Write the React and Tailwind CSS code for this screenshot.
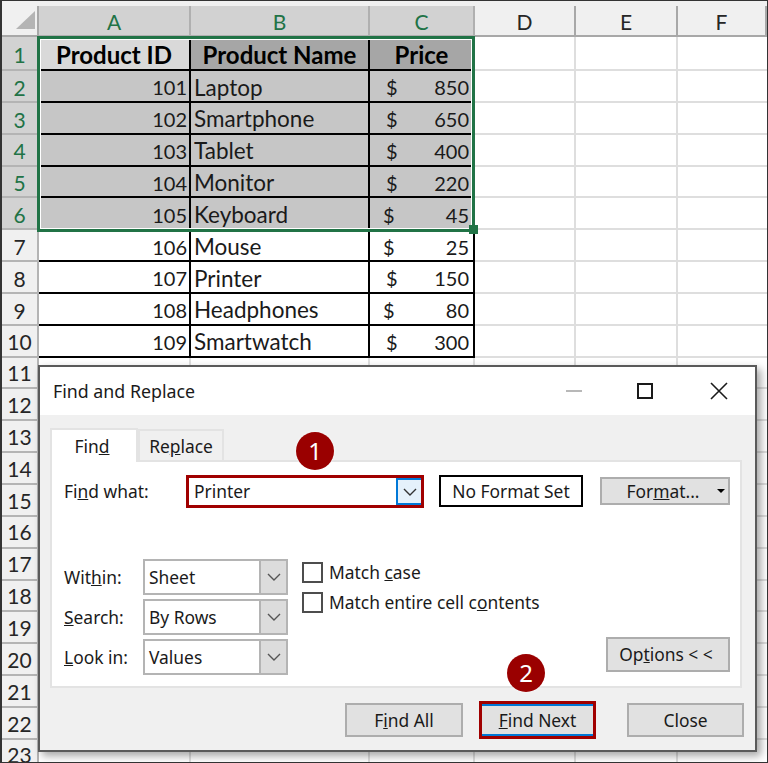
const sheetFont = { fontFamily: '"Lato", "Liberation Sans", sans-serif' };
const uiFont = { fontFamily: '"Noto Sans", "Liberation Sans", sans-serif' };

const rows = [
  ["101", "Laptop", "850", "pl-[16px]"],
  ["102", "Smartphone", "650", "pl-[16px]"],
  ["103", "Tablet", "400", "pl-[16px]"],
  ["104", "Monitor", "220", "pl-[16px]"],
  ["105", "Keyboard", "45", "pl-[13px]"],
  ["106", "Mouse", "25", "pl-[13px]"],
  ["107", "Printer", "150", "pl-[16px]"],
  ["108", "Headphones", "80", "pl-[13px]"],
  ["109", "Smartwatch", "300", "pl-[16px]"],
];

function RowHead({ n }) {
  const on = n <= 6;
  return (
    <div className={`w-[37px] shrink-0 flex items-center justify-center box-border border-b-2 border-r-2 text-[21px] ${n > 10 ? "pt-[1px]" : "pt-[3px]"} ${on ? "bg-[#d2d2d2] text-[#217346] border-[#b4b4b4]" : "bg-[#f0f0f0] text-[#262626] border-[#b4b4b4]"}`}>
      {n}
    </div>
  );
}

function Blank() {
  return (
    <>
      <div className="w-[101px] border-r-2 border-b-2 border-[#dedede]" />
      <div className="w-[102px] border-r-2 border-b-2 border-[#dedede]" />
      <div className="flex-1 border-b-2 border-[#dedede]" />
    </>
  );
}

function ColHead({ label, on, className }) {
  return (
    <div className={`flex items-center justify-center box-border border-r-2 border-b-2 pt-[2px] text-[21px] ${on ? "bg-[#d2d2d2] text-[#217346] border-[#b0b0b0]" : "text-[#262626] border-[#a8a8a8]"} ${className}`}>
      {label}
    </div>
  );
}

function Sheet() {
  return (
    <div className="flex flex-col" style={sheetFont}>
      <div className="flex h-[31px] mt-[5px] text-center">
        <div className="w-[37px] shrink-0 relative border-b-2 border-r-2 border-[#a8a8a8]">
          <svg className="absolute left-[13px] top-[5px]" width="20" height="20" viewBox="0 0 20 20">
            <polygon points="20,0 20,18 1,18" fill="#b4b4b4" />
          </svg>
        </div>
        <ColHead label="A" on className="w-[152px]" />
        <ColHead label="B" on className="w-[179px]" />
        <ColHead label="C" on className="w-[105px]" />
        <ColHead label="D" className="w-[101px]" />
        <ColHead label="E" className="w-[102px]" />
        <ColHead label="F" className="flex-1 border-r-0" />
      </div>

      <div className="flex h-[34px]">
        <RowHead n={1} />
        <div className="w-[152px] bg-[#d9d9d9] border-r-2 border-b-2 border-black flex items-center justify-center pt-[3px] font-bold text-[24px] text-black">Product ID</div>
        <div className="w-[179px] bg-[#a6a6a6] border-r-2 border-b-2 border-black flex items-center justify-center pt-[3px] font-bold text-[24px] text-black">Product Name</div>
        <div className="w-[105px] bg-[#a6a6a6] border-r-2 border-b-2 border-black flex items-center justify-center pt-[3px] font-bold text-[24px] text-black">Price</div>
        <Blank />
      </div>

      {rows.map((r, i) => {
        const on = i < 5;
        const bg = on ? "bg-[#c6c6c6]" : "bg-white";
        return (
          <div key={r[0]} className="flex h-[31.85px] text-[22.5px] text-[#1a1a1a]">
            <RowHead n={i + 2} />
            <div className={`w-[152px] ${bg} border-r-2 border-b-2 border-black flex items-center justify-end pr-[2px] pt-[3px] text-[20px]`}>{r[0]}</div>
            <div className={`w-[179px] ${bg} border-r-2 border-b-2 border-black flex items-center pl-[3px] pt-[3px]`}>{r[1]}</div>
            <div className={`w-[105px] ${bg} border-r-2 border-b-2 border-black flex items-center justify-between pr-[4px] pt-[3px] text-[20px] ${r[3]}`}>
              <span>$</span>
              <span>{r[2]}</span>
            </div>
            <Blank />
          </div>
        );
      })}

      {Array.from({ length: 13 }, (_, i) => (
        <div key={i} className="flex h-[31.85px]">
          <RowHead n={i + 11} />
          <div className="w-[152px] border-r-2 border-b-2 border-[#dedede]" />
          <div className="w-[179px] border-r-2 border-b-2 border-[#dedede]" />
          <div className="w-[105px] border-r-2 border-b-2 border-[#dedede]" />
          <Blank />
        </div>
      ))}
    </div>
  );
}

function Chevron({ color = "#555" }) {
  return (
    <svg width="14" height="8" viewBox="0 0 14 8" fill="none" stroke={color} strokeWidth="1.4">
      <path d="M1 1l6 6 6-6" />
    </svg>
  );
}

function SelectRow({ label, value }) {
  return (
    <div className="flex items-center h-[36px]">
      <div className="w-[79px] text-[17.4px]">{label}</div>
      <div className="w-[145px] h-full flex border-2 border-[#b4b4b4] bg-white">
        <div className="flex-1 pl-[4px] flex items-center text-[17.4px]">{value}</div>
        <div className="w-[27px] bg-[#dcdcdc] border-l-2 border-[#b4b4b4] flex items-center justify-center">
          <Chevron />
        </div>
      </div>
    </div>
  );
}

function Check({ label }) {
  return (
    <div className="flex items-center h-[21px] gap-[6px] text-[17.4px]">
      <div className="w-[21px] h-[21px] border-2 border-[#4d4d4d] bg-white" />
      <span>{label}</span>
    </div>
  );
}

const btn = "flex items-center justify-center bg-[#e1e1e1] border-2 border-[#adadad] text-[17.4px]";

function Dialog() {
  return (
    <div
      className="absolute left-[36px] top-[364px] w-[719px] h-[387px] flex flex-col border-2 border-[#5a5a5a] bg-[#f0f0f0] text-[#1a1a1a] shadow-[4px_4px_8px_rgba(0,0,0,0.35)]"
      style={uiFont}
    >
      <div className="h-[48px] bg-white flex items-center shrink-0 pl-[13px]">
        <span className="text-[17.8px]">Find and Replace</span>
        <div className="ml-auto flex items-center">
          <div className="w-[16px] h-[2px] bg-[#b8b8b8] mr-[55px]" />
          <div className="w-[16px] h-[16px] border-2 border-[#1a1a1a] mr-[57px]" />
          <svg className="mr-[27px]" width="18" height="18" viewBox="0 0 18 18" stroke="#1a1a1a" strokeWidth="1.6">
            <path d="M1 1l16 16M17 1L1 17" />
          </svg>
        </div>
      </div>

      <div className="flex items-end h-[45px] pl-[10px] shrink-0">
        <div className="w-[88px] h-[34px] bg-white border-2 border-b-0 border-[#e3e3e3] flex items-center justify-center pr-[4px] text-[17.4px] relative z-10 -mb-[2px]">
          <span>Fin<u>d</u></span>
        </div>
        <div className="w-[86px] h-[31px] bg-[#f0f0f0] border-2 border-b-0 border-[#e3e3e3] flex items-center justify-center pt-[1px] text-[17.4px]">
          <span>Re<u>p</u>lace</span>
        </div>
      </div>

      <div className="ml-[10px] mr-[13px] h-[228px] bg-white border-2 border-[#e3e3e3] flex flex-col pl-[12px] pt-[13px] pr-[10px] shrink-0">
        <div className="flex items-start h-[33px]">
          <div className="w-[122px] h-full flex items-center text-[17.4px]">
            <span>Fi<u>n</u>d what:</span>
          </div>
          <div className="w-[238px] h-[33px] border-[3px] border-[#a00000] bg-white flex">
            <div className="flex-1 pl-[5px] flex items-center text-[17.4px]">Printer</div>
            <div className="w-[25px] bg-[#e5f1fb] border-2 border-[#0078d7] border-r-0 flex items-center justify-center">
              <Chevron color="#333" />
            </div>
          </div>
          <div className="w-[144px] h-[32px] ml-[15px] border-2 border-black bg-white flex items-center justify-center text-[17.4px]">No Format Set</div>
          <div className={`${btn} w-[130px] h-[28px] ml-[17px] mt-[2px] relative`}>
            <span className="mr-[4px]">For<u>m</u>at...</span>
            <div className="absolute right-[3px] top-[10px] w-0 h-0 border-l-[4px] border-r-[4px] border-t-[4px] border-l-transparent border-r-transparent border-t-black" />
          </div>
        </div>

        <div className="flex mt-[51px]">
          <div className="flex flex-col gap-[4px]">
            <SelectRow label={<span>Wit<u>h</u>in:</span>} value="Sheet" />
            <SelectRow label={<span><u>S</u>earch:</span>} value="By Rows" />
            <SelectRow label={<span><u>L</u>ook in:</span>} value="Values" />
          </div>
          <div className="flex flex-col gap-[9px] ml-[14px] mt-[3px]">
            <Check label={<span>Match <u>c</u>ase</span>} />
            <Check label={<span>Match entire cell c<u>o</u>ntents</span>} />
          </div>
          <div className={`${btn} w-[124px] h-[35px] ml-auto self-end mb-[3px]`}>
            <span className="mr-[4px]">Op<u>t</u>ions &lt; &lt;</span>
          </div>
        </div>
      </div>

      <div className="flex items-center justify-end h-[38px] mt-[13px] pr-[11px] shrink-0">
        <div className={`${btn} w-[118px] h-[34px]`}><span>F<u>i</u>nd All</span></div>
        <div className="w-[117px] h-[38px] ml-[16px] border-[3px] border-[#a00000] flex flex-col bg-[#e1e1e1]">
          <div className="flex-1 border-y-2 border-[#0078d7] flex items-center justify-center text-[17.4px]">
            <span><u>F</u>ind Next</span>
          </div>
        </div>
        <div className={`${btn} w-[117px] h-[34px] ml-[31px]`}>Close</div>
      </div>
    </div>
  );
}

function Badge({ n, className }) {
  return (
    <div
      className={`absolute w-[38px] h-[38px] rounded-full bg-[#9a0000] text-white flex items-center justify-center text-[24px] shadow-[0_0_3px_rgba(255,255,255,0.8)] ${className}`}
      style={uiFont}
    >
      {n}
    </div>
  );
}

export default function App() {
  return (
    <div className="relative w-[768px] h-[763px] overflow-hidden bg-white border-y border-l-2 border-r border-[#333333]">
      <div className="absolute inset-x-0 top-0 h-[36px] bg-[#f0f0f0]" />
      <div className="relative">
        <Sheet />
      </div>
      <div className="absolute left-[35px] top-[35px] w-[438px] h-[196px] border-[3px] border-[#217346] pointer-events-none">
        <div className="w-full h-full border border-white" />
      </div>
      <div className="absolute left-[467px] top-[224px] w-[9px] h-[9px] bg-[#217346]" />
      <Dialog />
      <Badge n="1" className="left-[294px] top-[431px]" />
      <Badge n="2" className="left-[505px] top-[653px]" />
    </div>
  );
}
